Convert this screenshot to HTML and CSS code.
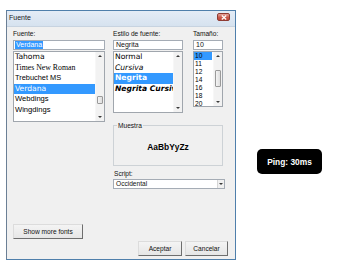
FILE: index.html
```html
<!DOCTYPE html>
<html lang="es">
<head>
<meta charset="utf-8">
<title>Fuente</title>
<link rel="stylesheet" href="styles.css">
</head>
<body>
<div class="desktop">
  <div class="dialog">
    <div class="titlebar">
      <span class="title">Fuente</span>
      <span class="close"><svg width="6" height="5" viewBox="0 0 6 5"><path d="M0.8 0.5 L5.2 4.5 M5.2 0.5 L0.8 4.5" stroke="#fff" stroke-width="1.3"/></svg></span>
    </div>
    <div class="content">
      <div class="grid">
        <div class="label">Fuente:</div>
        <div class="label">Estilo de fuente:</div>
        <div class="label">Tamaño:</div>

        <div class="input"><span class="sel">Verdana</span></div>
        <div class="input">Negrita</div>
        <div class="input">10</div>

        <div class="list list-font">
          <div class="items">
            <div class="item f-tahoma">Tahoma</div>
            <div class="item f-times">Times New Roman</div>
            <div class="item f-trebuchet">Trebuchet MS</div>
            <div class="item f-verdana selected">Verdana</div>
            <div class="item f-plain">Webdings</div>
            <div class="item f-plain">Wingdings</div>
          </div>
          <div class="sb">
            <div class="arrow"><span class="up"></span></div>
            <div class="track"><div class="thumb thumb-font"></div></div>
            <div class="arrow"><span class="down"></span></div>
          </div>
        </div>
        <div class="list list-style">
          <div class="items">
            <div class="item f-verdana">Normal</div>
            <div class="item f-verdana it">Cursiva</div>
            <div class="item f-verdana bd selected">Negrita</div>
            <div class="item f-verdana bd it">Negrita Cursiv</div>
          </div>
          <div class="sb">
            <div class="arrow"><span class="up"></span></div>
            <div class="track"></div>
            <div class="arrow"><span class="down"></span></div>
          </div>
        </div>
        <div class="list list-size">
          <div class="items">
            <div class="sitem selected">10</div>
            <div class="sitem">11</div>
            <div class="sitem">12</div>
            <div class="sitem">14</div>
            <div class="sitem">16</div>
            <div class="sitem">18</div>
            <div class="sitem">20</div>
          </div>
          <div class="sb">
            <div class="arrow"><span class="up"></span></div>
            <div class="track"><div class="thumb thumb-size"></div></div>
            <div class="arrow"><span class="down"></span></div>
          </div>
        </div>

        <div class="lower">
          <div class="group">
            <div class="group-title">Muestra</div>
            <div class="sample">AaBbYyZz</div>
          </div>
          <div class="label script-label">Script:</div>
          <div class="select">
            <span class="select-text">Occidental</span>
            <span class="dd"><span class="down"></span></span>
          </div>
        </div>
      </div>
      <button class="btn btn-more">Show more fonts</button>
      <div class="actions">
        <button class="btn btn-ok">Aceptar</button>
        <button class="btn btn-cancel">Cancelar</button>
      </div>
    </div>
  </div>
  <div class="ping">Ping: 30ms</div>
</div>
</body>
</html>
```

FILE: styles.css
```css
* { box-sizing: border-box; }
html, body { margin: 0; padding: 0; background: #ffffff; }
body { font-family: "Liberation Sans", Arial, sans-serif; }

.desktop {
  display: flex;
  align-items: flex-start;
  width: 340px;
  height: 268px;
}

.dialog {
  margin: 10px 0 0 6px;
  width: 230px;
  height: 250px;
  border: 1px solid #4f7fab;
  border-left-color: #6b7f95;
  background: #f0f0f0;
  display: flex;
  flex-direction: column;
}

.titlebar {
  height: 16px;
  display: flex;
  align-items: flex-start;
  background: linear-gradient(#e4ecf6, #d6e2ef);
  border-bottom: 1px solid #c7d3e0;
}
.title {
  font-size: 7px;
  line-height: 7px;
  margin: 3px 0 0 2px;
  color: #1a1a1a;
}
.close {
  margin: 2px 5px 0 auto;
  width: 13px;
  height: 8px;
  border: 1px solid #8e3b33;
  border-radius: 2px;
  background: linear-gradient(#e6a59b, #c9594b 55%, #c2493b);
  display: flex;
  align-items: center;
  justify-content: center;
}
.close svg { display: block; }

.content {
  flex: 1;
  padding: 3px 0 0 6px;
  display: flex;
  flex-direction: column;
}

.grid {
  display: grid;
  grid-template-columns: 92px 70px 32px;
  column-gap: 8px;
  align-items: start;
}
.grid > :nth-child(3n+3) { margin-left: 2px; }

.label {
  font-size: 6.6px;
  line-height: 7px;
  height: 7px;
  margin-bottom: 3px;
  color: #111;
  white-space: nowrap;
}

.input {
  height: 10px;
  border: 1px solid #a5acb5;
  background: #fff;
  font-size: 7px;
  line-height: 8px;
  padding-left: 2px;
  color: #111;
  white-space: nowrap;
  overflow: hidden;
}
.input .sel {
  background: #3399ff;
  color: #fff;
  padding: 0 1px;
  margin-left: -1px;
  display: inline-block;
  line-height: 8px;
}

.list {
  margin-top: 1px;
  border: 1px solid #a0a6ad;
  background: #fff;
  display: flex;
  overflow: hidden;
}
.list-font { height: 71px; }
.list-style { height: 62px; }
.list-size { height: 56px; }

.items {
  flex: 1;
  min-width: 0;
  overflow: hidden;
}

.item {
  height: 10.5px;
  line-height: 10.5px;
  font-size: 8px;
  padding-left: 1px;
  white-space: nowrap;
  color: #000;
}
.f-tahoma { font-family: "DejaVu Sans", sans-serif; font-size: 7.6px; }
.f-times { font-family: "Liberation Serif", "Times New Roman", serif; font-size: 7.8px; }
.f-trebuchet { font-family: "Liberation Sans", Arial, sans-serif; font-size: 7.4px; }
.f-verdana { font-family: "DejaVu Sans", Verdana, sans-serif; font-size: 7.6px; }
.f-plain { font-family: "Liberation Sans", Arial, sans-serif; font-size: 7.6px; }
.it { font-style: italic; }
.bd { font-weight: bold; }
.selected { background: #3399ff; color: #fff; }

.sitem {
  height: 8px;
  line-height: 8px;
  font-size: 6.6px;
  padding-left: 1px;
  color: #000;
  margin-right: 1px;
}

.sb {
  width: 9px;
  display: flex;
  flex-direction: column;
  background: #f2f2f2;
  border-left: 1px solid #f7f7f7;
}
.arrow {
  height: 8px;
  display: flex;
  align-items: center;
  justify-content: center;
}
.track { flex: 1; }
.thumb {
  margin: 0 1px 0 1px;
  border: 1px solid #9a9a9a;
  border-radius: 1px;
  background: linear-gradient(90deg, #f4f4f4, #dedede);
}
.thumb-font { margin-top: 36px; height: 8px; }
.thumb-size { margin-top: 10px; height: 17px; }

.up, .down {
  display: block;
  width: 0;
  height: 0;
  border-left: 2px solid transparent;
  border-right: 2px solid transparent;
}
.up { border-bottom: 2px solid #3a3a3a; }
.down { border-top: 2px solid #3a3a3a; }

.lower {
  grid-column: 2 / 4;
  margin-top: 3px;
}

.group {
  height: 41px;
  border: 1px solid #cdd2d6;
  display: flex;
  flex-direction: column;
}
.group-title {
  width: fit-content;
  margin: -4px 0 0 3px;
  padding: 0 1px;
  background: #f0f0f0;
  font-size: 6.6px;
  line-height: 7px;
  color: #111;
}
.sample {
  flex: 1;
  display: flex;
  align-items: center;
  justify-content: center;
  font-weight: bold;
  font-size: 8.4px;
  padding-bottom: 1px;
  color: #000;
}

.script-label { margin-top: 4px; margin-bottom: 2px; margin-left: 1px; }

.select {
  width: 112px;
  height: 10px;
  border: 1px solid #a5acb5;
  background: #fff;
  display: flex;
  align-items: stretch;
}
.select-text {
  flex: 1;
  font-size: 6.6px;
  line-height: 8px;
  padding-left: 2px;
  color: #111;
}
.dd {
  width: 7px;
  background: #f0f0f0;
  border-left: 1px solid #d6d6d6;
  display: flex;
  align-items: center;
  justify-content: center;
}

.btn {
  font-family: "Liberation Sans", Arial, sans-serif;
  font-size: 6.6px;
  line-height: 7px;
  color: #111;
  background: linear-gradient(#f4f4f4, #e6e6e6);
  border: 1px solid;
  border-color: #dcdcdc #6e6e6e #6e6e6e #dcdcdc;
  border-radius: 0;
  padding: 0;
  margin: 0;
}
.btn-more {
  margin-top: 35px;
  width: 70px;
  height: 15px;
}
.actions {
  margin-top: 2px;
  display: flex;
  gap: 3px;
  padding-left: 125px;
}
.btn-ok { width: 44px; height: 15px; }
.btn-cancel { width: 43px; height: 15px; }

.ping {
  margin: 149px 0 0 21px;
  width: 65px;
  height: 25px;
  border-radius: 5px;
  background: #000;
  color: #fff;
  font-weight: bold;
  font-size: 8.4px;
  display: flex;
  align-items: center;
  justify-content: center;
}
```
